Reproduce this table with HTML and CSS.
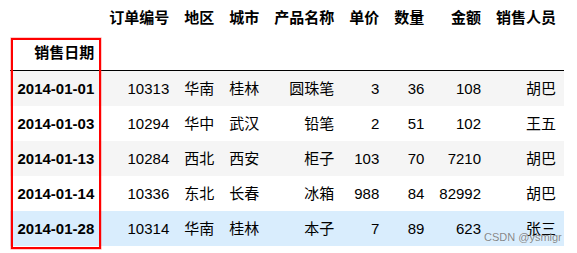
FILE: index.html
```html
<!DOCTYPE html>
<html lang="zh">
<head>
<meta charset="utf-8">
<title>DataFrame</title>
<link rel="stylesheet" href="styles.css">
</head>
<body>
<div class="output">
  <table class="dataframe">
    <thead>
      <tr>
        <th></th>
        <th>订单编号</th>
        <th>地区</th>
        <th>城市</th>
        <th>产品名称</th>
        <th>单价</th>
        <th>数量</th>
        <th>金额</th>
        <th>销售人员</th>
      </tr>
      <tr>
        <th>销售日期</th>
        <th></th><th></th><th></th><th></th><th></th><th></th><th></th><th></th>
      </tr>
    </thead>
    <tbody>
      <tr class="odd">
        <th>2014-01-01</th><td>10313</td><td>华南</td><td>桂林</td><td>圆珠笔</td><td>3</td><td>36</td><td>108</td><td>胡巴</td>
      </tr>
      <tr>
        <th>2014-01-03</th><td>10294</td><td>华中</td><td>武汉</td><td>铅笔</td><td>2</td><td>51</td><td>102</td><td>王五</td>
      </tr>
      <tr class="odd">
        <th>2014-01-13</th><td>10284</td><td>西北</td><td>西安</td><td>柜子</td><td>103</td><td>70</td><td>7210</td><td>胡巴</td>
      </tr>
      <tr>
        <th>2014-01-14</th><td>10336</td><td>东北</td><td>长春</td><td>冰箱</td><td>988</td><td>84</td><td>82992</td><td>胡巴</td>
      </tr>
      <tr class="hover">
        <th>2014-01-28</th><td>10314</td><td>华南</td><td>桂林</td><td>本子</td><td>7</td><td>89</td><td>623</td><td>张三</td>
      </tr>
    </tbody>
  </table>
  <div class="highlight-box"></div>
  <div class="watermark">CSDN @ysmlgr</div>
</div>
</body>
</html>
```

FILE: styles.css
```css
html, body {
  margin: 0;
  padding: 0;
  background: #ffffff;
}

.output {
  position: relative;
  width: 577px;
  height: 253px;
  overflow: hidden;
  font-family: "Liberation Sans", "Noto Sans CJK SC", sans-serif;
  font-size: 15px;
  color: #000000;
}

.dataframe {
  border-collapse: collapse;
  border-spacing: 0;
  margin-left: 10px;
  table-layout: auto;
}

.dataframe th,
.dataframe td {
  padding: 7.5px 7.5px;
  line-height: 20px;
  text-align: right;
  vertical-align: middle;
  white-space: nowrap;
  border: none;
}

.dataframe th {
  font-weight: bold;
}

.dataframe td {
  font-weight: normal;
}

.dataframe thead {
  border-bottom: 1px solid #000000;
}

.dataframe tbody tr.odd {
  background: #f5f5f5;
}

.dataframe tbody tr.hover {
  background: #d9edfd;
}

.highlight-box {
  position: absolute;
  left: 11px;
  top: 38px;
  width: 86px;
  height: 207px;
  border: 2px solid #ff0000;
  box-shadow: 0 0 0 0.6px rgba(255, 60, 60, 0.45);
}

.watermark {
  position: absolute;
  left: 484px;
  top: 231px;
  font-size: 11px;
  line-height: 13px;
  color: rgba(105, 105, 105, 0.8);
  text-shadow: 0 0 1px rgba(255, 255, 255, 0.6);
  white-space: nowrap;
}
```
